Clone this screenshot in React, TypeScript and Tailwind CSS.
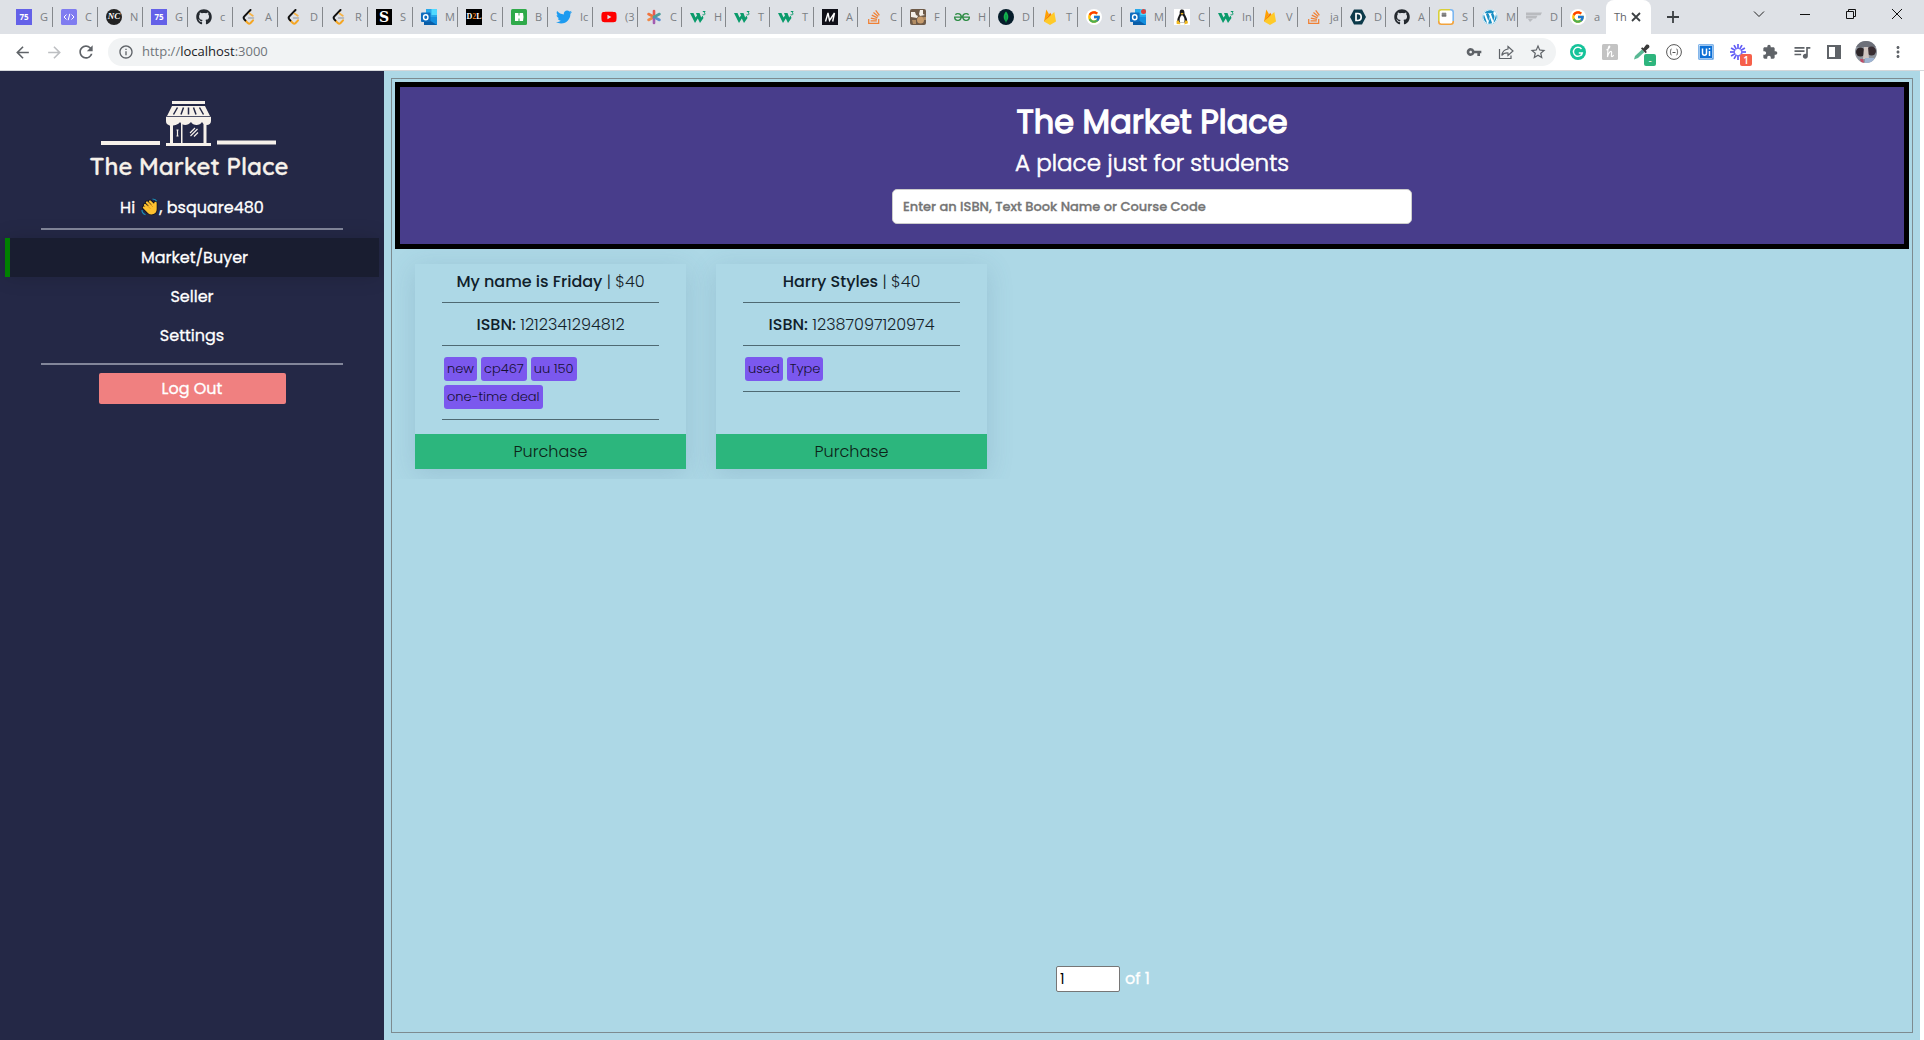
import type { ReactNode } from "react";
import {
  FaGithub,
  FaStackOverflow,
  FaTwitter,
  FaWordpress,
  FaYoutube,
} from "react-icons/fa";
import { FcGoogle } from "react-icons/fc";
import { SiGeeksforgeeks } from "react-icons/si";
import {
  MdArrowBack,
  MdArrowForward,
  MdExtension,
  MdInfoOutline,
  MdMoreVert,
  MdQueueMusic,
  MdRefresh,
  MdStarBorder,
  MdVpnKey,
} from "react-icons/md";

/* ---------- favicons ---------- */

function Badge75() {
  return (
    <span className="flex size-4 items-center justify-center bg-[#6461e8] text-[8px] font-bold text-white">
      75
    </span>
  );
}

function CodeIcon() {
  return (
    <svg viewBox="0 0 16 16" className="size-4">
      <rect width="16" height="16" rx="1.5" fill="#7f7cf0" />
      <path
        d="M5.5 5.5 3 8l2.500 2.500M10.500 5.500 13 8l-2.500 2.500M8.800 4.800 7.200 11.200"
        fill="none"
        stroke="#fff"
        strokeWidth="1"
      />
    </svg>
  );
}

function NcIcon() {
  return (
    <span className="flex size-4 items-center justify-center rounded-full bg-[#222] font-['Liberation_Serif',serif] text-[9px] font-bold text-white italic">
      NC
    </span>
  );
}

function LeetIcon() {
  return (
    <svg viewBox="0 0 16 16" className="size-4" fill="none" strokeLinecap="round">
      <path d="M12 11.300 9.600 14c-.8.800-2 .8-2.800 0L4.500 11.700" stroke="#f5a623" strokeWidth="2" />
      <path d="M7.500 9h5" stroke="#a9adb3" strokeWidth="1.500" />
      <path d="M9.500 1 3.300 7.400c-.8.900-.8 2 0 2.900l1 1.100" stroke="#111" strokeWidth="2" />
      <path d="m8.500 4.500 3.300 2.300" stroke="#f5b44a" strokeWidth="1.800" />
    </svg>
  );
}

function SIcon() {
  return (
    <span className="flex size-4 items-center justify-center bg-black font-['DejaVu_Serif',serif] text-[14px] font-bold text-white">
      S
    </span>
  );
}

function OutlookIcon({ alert = false }: { alert?: boolean }) {
  return (
    <svg viewBox="0 0 16 16" className="size-4">
      <rect x="5" y="0" width="11" height="13" fill="#28a8ea" />
      <rect x="10.500" y="0" width="5.500" height="6" fill="#50d9ff" />
      <path d="M3 8h13v8H3z" fill="#1490df" />
      <path d="m3 8 13 8H3z" fill="#0a5ea8" />
      <rect x="0" y="3.500" width="9.500" height="9.500" rx="1" fill="#0f6cbd" />
      <ellipse cx="4.750" cy="8.200" rx="2.200" ry="2.500" fill="none" stroke="#fff" strokeWidth="1.400" />
      {alert && <circle cx="13.500" cy="2.500" r="2.500" fill="#e0403a" />}
    </svg>
  );
}

function D2LIcon() {
  return (
    <span className="flex size-4 items-center justify-center bg-black font-['Liberation_Serif',serif] text-[8px] font-bold text-white">
      D<span className="text-[#e87511]">2</span>L
    </span>
  );
}

function GreenBlockIcon() {
  return (
    <svg viewBox="0 0 16 16" className="size-4">
      <rect width="16" height="16" rx="1.500" fill="#2faa4a" />
      <path d="M4 4h3.500v2.500h1V4H12l.5 4-.5 4H8.500V9.500h-1V12H4z" fill="#fff" />
    </svg>
  );
}

function SparkIcon() {
  return (
    <svg viewBox="0 0 16 16" className="size-4" strokeWidth="2.600" strokeLinecap="round">
      <path d="M8 8V2" stroke="#e8584f" />
      <path d="m8 8-5.500-3" stroke="#f0743e" />
      <path d="m8 8-5.500 3" stroke="#ee8a4a" />
      <path d="M8 8v6" stroke="#a25bb0" />
      <path d="m8 8 5.500 3" stroke="#5b8fd0" />
      <path d="m8 8 5.500-3" stroke="#4f9d9b" />
    </svg>
  );
}

function W3Icon() {
  return (
    <svg viewBox="0 0 16 16" className="size-4">
      <path d="M0 4h3.500l2 4.500L7 6.500 6 4h3.500l1.700 4.500 1.300-2 1 2.500L10 14 7.800 9.500 5 14z" fill="#0a9b6b" />
      <path
        d="M12.800 2.500h2.300l-1 1.400c1.200 0 1.300 2-.3 2-.6 0-1-.2-1.200-.6"
        fill="none"
        stroke="#0a9b6b"
      />
    </svg>
  );
}

function MIcon() {
  return (
    <svg viewBox="0 0 16 16" className="size-4">
      <rect width="16" height="16" fill="#101018" />
      <path d="M3.500 12.500 6 4l1.500 7.500L12.500 4l-1.800 8.500" fill="none" stroke="#fff" strokeWidth="1.400" />
    </svg>
  );
}

function CookieIcon() {
  return (
    <svg viewBox="0 0 16 16" className="size-4">
      <rect width="16" height="16" rx="2" fill="#6e5a48" />
      <path d="M1 3h4l1 3 2 1-1 2-6-1zM10 1h3v4l2 1-5 1-1-2z" fill="#f4efe8" />
      <circle cx="10.500" cy="11" r="3.500" fill="#c79c6d" />
      <path d="M2 11h4v4H3zM13 8h3v3h-2z" fill="#b28d64" />
    </svg>
  );
}

function MongoIcon() {
  return (
    <svg viewBox="0 0 16 16" className="size-4">
      <circle cx="8" cy="8" r="8" fill="#061d2b" />
      <path d="M8 2.500c3.200 3.600 3 7.400 0 10.500-3-3.100-3.200-6.900 0-10.500z" fill="#12b34f" />
      <path d="M8 6v8" stroke="#0a6b35" strokeWidth=".6" />
    </svg>
  );
}

function FirebaseIcon() {
  return (
    <svg viewBox="0 0 16 16" className="size-4">
      <path d="M2 12.500 4.300.500 7 5.200 2.500 12.500z" fill="#ffa000" />
      <path d="m2 12.500 6.300-8.800 1.700 3z" fill="#f57c00" />
      <path d="M2 12.500 12.300 3l1.700 9.500L8 16z" fill="#ffca28" />
    </svg>
  );
}

function GoogleIcon() {
  return (
    <span className="flex size-4 items-center justify-center rounded-full bg-white">
      <FcGoogle className="size-3.5" />
    </span>
  );
}

function PenguinIcon() {
  return (
    <svg viewBox="0 0 16 16" className="size-4">
      <rect width="16" height="16" fill="#fff" />
      <path
        d="M8 .5c2.300 0 2.500 2 2.500 4 .3 1.800 3.500 5 2.500 9H3.500C2.500 9.500 5.500 6.300 5.700 4.500c0-2 0-4 2.300-4z"
        fill="#1a1a1a"
      />
      <path d="M8 6c2.200 1.500 3 4 2.300 7.500H6C5 10 6 7.500 8 6z" fill="#fff" />
      <path
        d="m6.500 4.500 1.500-.7 1.700.7L8 5.800zM2.500 12l2-.8 2 4-3.800-.2zM13.500 12l-2.200-.8-1 4.300 3.700-1.200z"
        fill="#f2b91d"
      />
    </svg>
  );
}

function HexDIcon() {
  return (
    <svg viewBox="0 0 16 16" className="size-4">
      <path d="M4 .5h8L16 8l-4 7.500H4L0 8z" fill="#0c3a4a" />
      <path d="M6 4.500h1.800c4.500 0 4.500 7 0 7H6z" fill="none" stroke="#fff" strokeWidth="1.700" />
    </svg>
  );
}

function HashIcon() {
  return (
    <svg viewBox="0 0 16 16" className="size-4" fill="none">
      <rect x=".8" y=".8" width="14.400" height="14.400" rx="2.500" fill="#fff" />
      <path d="M.8 12V3.300A2.500 2.500 0 0 1 3.300.8H12" stroke="#d8cf3a" strokeWidth="1.600" />
      <path d="M12 .8h.7a2.500 2.500 0 0 1 2.500 2.500V12" stroke="#7cb7f0" strokeWidth="1.600" />
      <path
        d="M15.200 12v.7a2.500 2.500 0 0 1-2.500 2.500H3.300a2.500 2.500 0 0 1-2.500-2.500V12"
        stroke="#f2a33c"
        strokeWidth="1.600"
      />
      <path d="M5 3.500v4.500M7 3.500v4.500M3.500 5h5M3.500 6.800h5" stroke="#444" strokeWidth=".8" />
    </svg>
  );
}

function LinesIcon() {
  return (
    <svg viewBox="0 0 16 16" className="size-4" fill="#b9bbbf">
      <path d="M0 3.500h16l-1.500 2.800H0zM0 6.800h11.500L10 9.500H0zM2 10h5l-3 3z" />
    </svg>
  );
}

interface BrowserTab {
  label: string;
  icon: ReactNode;
}

const github = <FaGithub className="size-4 text-[#24292f]" />;
const stack = <FaStackOverflow className="size-4 text-[#f08034]" />;

const openedFirst: BrowserTab[] = [
  { label: "G", icon: <Badge75 /> },
  { label: "C", icon: <CodeIcon /> },
  { label: "N", icon: <NcIcon /> },
  { label: "G", icon: <Badge75 /> },
  { label: "c", icon: github },
  { label: "A", icon: <LeetIcon /> },
  { label: "D", icon: <LeetIcon /> },
  { label: "R", icon: <LeetIcon /> },
  { label: "S", icon: <SIcon /> },
  { label: "M", icon: <OutlookIcon /> },
  { label: "C", icon: <D2LIcon /> },
  { label: "B", icon: <GreenBlockIcon /> },
  { label: "Ic", icon: <FaTwitter className="size-4 text-[#1d9bf0]" /> },
  { label: "(3", icon: <FaYoutube className="size-4 text-[#ff0000]" /> },
];

const openedLater: BrowserTab[] = [
  { label: "C", icon: <SparkIcon /> },
  { label: "H", icon: <W3Icon /> },
  { label: "T", icon: <W3Icon /> },
  { label: "T", icon: <W3Icon /> },
  { label: "A", icon: <MIcon /> },
  { label: "C", icon: stack },
  { label: "F", icon: <CookieIcon /> },
  { label: "H", icon: <SiGeeksforgeeks className="size-4 text-[#2f8d46]" /> },
  { label: "D", icon: <MongoIcon /> },
  { label: "T", icon: <FirebaseIcon /> },
  { label: "c", icon: <GoogleIcon /> },
  { label: "M", icon: <OutlookIcon alert /> },
  { label: "C", icon: <PenguinIcon /> },
  { label: "In", icon: <W3Icon /> },
  { label: "V", icon: <FirebaseIcon /> },
  { label: "ja", icon: stack },
  { label: "D", icon: <HexDIcon /> },
  { label: "A", icon: github },
  { label: "S", icon: <HashIcon /> },
  { label: "M", icon: <FaWordpress className="size-4 rounded-full bg-white text-[#1a8fc4]" /> },
  { label: "D", icon: <LinesIcon /> },
  { label: "a", icon: <GoogleIcon /> },
];

function Tab({ tab, width, last }: { tab: BrowserTab; width: string; last?: boolean }) {
  return (
    <button
      className={`flex h-5 shrink-0 items-center gap-2 border-r pl-2 ${width} ${
        last ? "border-transparent" : "border-[#85888c]"
      }`}
    >
      <span className="shrink-0">{tab.icon}</span>
      <span className="text-[11px] whitespace-nowrap text-[#7b7f84]">{tab.label}</span>
    </button>
  );
}

function TabStrip() {
  return (
    <div className="flex h-[34px] items-center bg-[#dee1e6] pl-2">
      {openedFirst.map((tab, i) => (
        <Tab key={i} tab={tab} width="w-[45px]" />
      ))}
      {openedLater.map((tab, i) => (
        <Tab key={i} tab={tab} width="w-11" last={i === openedLater.length - 1} />
      ))}
      <div className="flex h-full w-[45px] shrink-0 items-center gap-1 rounded-t-lg bg-white pl-2">
        <span className="text-[11px] whitespace-nowrap text-[#5f6368]">Th</span>
        <button aria-label="Close tab">
          <svg viewBox="0 0 10 10" className="size-2.5" stroke="#3c4043" strokeWidth="1.800">
            <path d="m1 1 8 8M9 1 1 9" />
          </svg>
        </button>
      </div>
      <button aria-label="New tab" className="ml-4 shrink-0">
        <svg viewBox="0 0 12 12" className="size-3" stroke="#3c4043" strokeWidth="1.800">
          <path d="M6 0v12M0 6h12" />
        </svg>
      </button>
      <div className="mr-1 mb-1.5 ml-auto flex">
        <button aria-label="Search tabs" className="flex w-[46px] justify-center">
          <svg viewBox="0 0 12 12" className="size-3" fill="none" stroke="#222">
            <path d="m1 3.500 5 5 5-5" />
          </svg>
        </button>
        <button aria-label="Minimize" className="flex w-[46px] justify-center">
          <svg viewBox="0 0 12 12" className="size-3" stroke="#111">
            <path d="M1 6.500h10" />
          </svg>
        </button>
        <button aria-label="Restore" className="flex w-[46px] justify-center">
          <svg viewBox="0 0 12 12" className="size-3" fill="none" stroke="#111">
            <path d="M1.500 3.500h7v7h-7zM3.500 3.500v-2h7v7h-2" />
          </svg>
        </button>
        <button aria-label="Close" className="flex w-[46px] justify-center">
          <svg viewBox="0 0 12 12" className="size-3" stroke="#111">
            <path d="m1 1 10 10M11 1 1 11" />
          </svg>
        </button>
      </div>
    </div>
  );
}

function ToolButton({ label, children }: { label: string; children: ReactNode }) {
  return (
    <button
      aria-label={label}
      className="relative flex h-7 w-8 shrink-0 items-center justify-center text-[#5f6368]"
    >
      {children}
    </button>
  );
}

const loomRays = [0, 30, 60, 90, 120, 150, 180, 210, 240, 270, 300, 330];

function Toolbar() {
  return (
    <div className="flex h-[37px] items-center border-b border-[#d5d8db] bg-white pr-2.5 pl-1.5">
      <ToolButton label="Back">
        <MdArrowBack className="size-[19px]" />
      </ToolButton>
      <ToolButton label="Forward">
        <MdArrowForward className="size-[19px] text-[#bdbfc2]" />
      </ToolButton>
      <ToolButton label="Reload">
        <MdRefresh className="size-5" />
      </ToolButton>

      <div className="mx-1.5 flex h-7 flex-1 items-center rounded-full bg-[#f1f3f4] pr-0.5 pl-2.5">
        <MdInfoOutline className="size-4 text-[#5f6368]" />
        <p className="ml-2 flex-1 text-[13px] text-[#70757a]">
          http://<span className="text-[#202124]">localhost</span>:3000
        </p>
        <ToolButton label="Saved passwords">
          <MdVpnKey className="size-4" />
        </ToolButton>
        <ToolButton label="Share">
          <svg viewBox="0 0 16 16" className="size-4" fill="none" stroke="currentColor" strokeWidth="1.200">
            <path d="M1.500 5v9.500h11.500v-3" />
            <path d="M10 2.500 15 7l-5 4.500V9C7 8.800 5 9.800 3.800 11.500 4.200 8 6.500 5.500 10 5z" />
          </svg>
        </ToolButton>
        <ToolButton label="Bookmark">
          <MdStarBorder className="size-[18px]" />
        </ToolButton>
      </div>

      <ToolButton label="Grammarly">
        <svg viewBox="0 0 16 16" className="size-4" fill="none">
          <circle cx="8" cy="8" r="8" fill="#15c39a" />
          <path d="M11.500 5A4.500 4.500 0 1 0 12.300 9H8.800M12.300 9l-1 2.500" stroke="#fff" strokeWidth="1.400" />
        </svg>
      </ToolButton>
      <ToolButton label="Honey">
        <svg viewBox="0 0 16 16" className="size-4" fill="none">
          <rect width="16" height="16" rx="1.500" fill="#c3c3c3" />
          <path
            d="M4.500 6C7 5 8.700 2 7.200 2S5.800 8 5.500 13C6.300 9.500 8 7 9.300 7.500c1.300.8-.8 4.500.3 5 .8.200 1.500-.5 2-1.500"
            stroke="#fff"
            strokeWidth="1.200"
          />
        </svg>
      </ToolButton>
      <ToolButton label="Color picker">
        <svg viewBox="0 0 16 16" className="size-4">
          <path d="m0 15.500 1-3.500L8 5.500 10.500 8 4 14z" fill="#59b894" />
          <path
            d="m7 4.500 1.200-1.200 1.300 1L12 1c1.800-1.500 4.500.5 3 2.800l-3.300 3 1.200 1.200-1.200 1.200z"
            fill="#3a3a3a"
          />
        </svg>
        <span className="absolute right-0.5 bottom-0 flex size-3 items-center justify-center rounded-xs bg-[#2db57d] text-[10px] text-white">
          -
        </span>
      </ToolButton>
      <ToolButton label="JSON viewer">
        <svg viewBox="0 0 16 16" className="size-4" fill="none" stroke="#555">
          <circle cx="8" cy="8" r="7.400" />
          <path d="M5.500 5C4 5 5.300 7.500 4 8c1.300.5 0 3 1.500 3M10.500 5c1.500 0 .2 2.500 1.500 3-1.300.5 0 3-1.500 3M6.500 8.500h3" />
        </svg>
      </ToolButton>
      <ToolButton label="UiPath">
        <svg viewBox="0 0 16 16" className="size-4" fill="none" stroke="#fff">
          <rect width="16" height="16" fill="#0b6fd6" />
          <rect x="1.500" y="1.500" width="13" height="13" strokeWidth=".6" />
          <path d="M4.500 4.500v4.800c0 2.500 4 2.500 4 0V4.500M11.500 7v5M11.500 4v1.500" strokeWidth="1.500" />
        </svg>
      </ToolButton>
      <ToolButton label="Loom">
        <svg viewBox="0 0 16 16" className="size-4" stroke="#625df5" strokeWidth="1.700">
          {loomRays.map((angle) => (
            <path key={angle} d="M8 0v5" transform={`rotate(${angle} 8 8)`} />
          ))}
        </svg>
        <span className="absolute right-0.5 bottom-0 flex size-3 items-center justify-center rounded-xs bg-[#f6604a] text-[10px] font-semibold text-white">
          1
        </span>
      </ToolButton>
      <ToolButton label="Extensions">
        <MdExtension className="size-4" />
      </ToolButton>
      <ToolButton label="Media controls">
        <MdQueueMusic className="size-5" />
      </ToolButton>
      <ToolButton label="Side panel">
        <svg viewBox="0 0 14 14" className="size-3.5">
          <path d="M1 1h12v12H1z" fill="none" stroke="currentColor" strokeWidth="2" />
          <path d="M8 1h5v12H8z" fill="currentColor" />
        </svg>
      </ToolButton>
      <ToolButton label="Profile">
        <svg viewBox="0 0 22 22" className="size-[22px] rounded-full">
          <rect width="22" height="22" fill="#8d939c" />
          <path d="M0 0h22v6H0z" fill="#6d7079" />
          <circle cx="5.500" cy="11" r="4.500" fill="#2c2529" />
          <circle cx="16.500" cy="10" r="4.500" fill="#3a2e33" />
          <path d="M9 6h4l1 12H8z" fill="#cfc4c0" />
          <path d="M5 18h3l1 4H6z" fill="#c04a68" />
          <path d="M10 17h9v5h-9z" fill="#9db3d2" />
        </svg>
      </ToolButton>
      <ToolButton label="Menu">
        <MdMoreVert className="size-[18px]" />
      </ToolButton>
    </div>
  );
}

/* ---------- page ---------- */

function Logo() {
  return (
    <div className="flex flex-col items-center text-[#f6f1ea]">
      <svg viewBox="0 0 176 46" className="h-[46px] w-44" fill="currentColor">
        <path d="M0 40h59v4H0zM116 39.500h59v4h-59z" />
        <path d="M71 0h33v3H71zM71 5h33l6 12H65z" />
        <path d="M65 16h45v4c0 5-7 5-9 1-2 4-9 4-11 0-3 4-9 4-11 0-2 4-14 6-14-1z" />
        <path d="M69 22h3v20h-3zM80 22h1.500v20H80zM102.500 22h3v20h-3zM65 42h45v3H65z" />
        <path
          d="m76.500 6.500-4 7M82.500 6.500l-2.500 7M87.500 6.500v7M92.500 6.500l2.500 7M98.500 6.500l4 7"
          stroke="#242846"
          strokeWidth="1.500"
        />
        <path d="M66 15.500h43" stroke="#242846" strokeWidth=".8" />
        <path
          d="M76.500 29v6M75.500 29h2M75.500 35h2M89 32l5-5M89.500 35l7-7M93 35.500l4-4"
          fill="none"
          stroke="currentColor"
          strokeWidth="1.200"
        />
      </svg>
      <p className="mt-1 font-['Quicksand','Nunito','Lato',sans-serif] text-2xl leading-[30px] font-semibold whitespace-nowrap">
        The Market Place
      </p>
    </div>
  );
}

function WavingHand() {
  return (
    <svg viewBox="0 0 18 18" className="ml-0.5 inline size-[18px] align-[-3px]" role="img" aria-label="waving hand">
      <g stroke="#10131f" strokeWidth="4" strokeLinecap="round" strokeLinejoin="round" fill="#10131f">
        <path d="m4 7 6 6M6 4.500l6 6M9 3.500l5 5M14.500 5v6c0 4-4 5.500-7 3L3 9.500" />
      </g>
      <g stroke="#fdc130" strokeWidth="2.400" strokeLinecap="round" strokeLinejoin="round" fill="#fdc130">
        <path d="m4 7 6 6M6 4.500l6 6M9 3.500l5 5M14.500 5v6c0 4-4 5.500-7 3L3 9.500" />
      </g>
      <path d="m5.500 6.800 4 4M8 5l4 4" stroke="#d98a12" strokeWidth=".7" />
      <path
        d="M11.500 1c2 0 3.500.8 4.300 2.300M1 12c0 2.200 1.200 4 3.500 4.600"
        fill="none"
        stroke="#1a8fb8"
        strokeWidth="1.200"
      />
    </svg>
  );
}

const navLinks = [
  { label: "Market/Buyer", href: "#market", active: true },
  { label: "Seller", href: "#seller", active: false },
  { label: "Settings", href: "#settings", active: false },
];

function Sidebar() {
  return (
    <aside className="flex w-1/5 flex-col bg-[#242846] px-[5px] pt-[30px] text-center text-base text-white [-webkit-text-stroke:0.3px]">
      <div className="pr-1.5">
        <Logo />
      </div>
      <p className="mt-[15px] leading-6">
        Hi <WavingHand />, bsquare480
      </p>
      <hr className="mx-9 mt-2 border-t-2 border-[#82869a]" />
      <nav className="mt-2 flex flex-col">
        {navLinks.map((link) => (
          <a
            key={link.label}
            href={link.href}
            className={
              link.active
                ? "border-l-[5px] border-[#008000] bg-[#191d30] py-[7px] leading-[25px] shadow-[0_0_20px_rgba(0,0,0,0.15)]"
                : "py-[7px] leading-[25px]"
            }
          >
            {link.label}
          </a>
        ))}
      </nav>
      <hr className="mx-9 mt-2 border-t-2 border-[#82869a]" />
      <button className="mx-auto mt-2 h-[31px] w-1/2 rounded-xs bg-[#f08080]">Log Out</button>
    </aside>
  );
}

function Hero() {
  return (
    <header className="flex flex-col items-center border-[5px] border-black bg-[#483d8b] pt-3 pb-5 text-white">
      <h1 className="text-[32px] leading-[46px] [-webkit-text-stroke:1.3px]">The Market Place</h1>
      <h2 className="text-[23px] leading-9 font-light [-webkit-text-stroke:0.6px]">
        A place just for students
      </h2>
      <input
        type="text"
        aria-label="Search listings"
        placeholder="Enter an ISBN, Text Book Name or Course Code"
        className="mt-2 h-[35px] w-[520px] rounded-[5px] border border-[#ccc] bg-white px-2.5 text-[13px] font-medium text-black [-webkit-text-stroke:0.3px] placeholder:text-[#757575]"
      />
    </header>
  );
}

interface Listing {
  title: string;
  price: number;
  isbn: string;
  tags: string[];
}

const listings: Listing[] = [
  {
    title: "My name is Friday",
    price: 40,
    isbn: "1212341294812",
    tags: ["new", "cp467", "uu 150", "one-time deal"],
  },
  {
    title: "Harry Styles",
    price: 40,
    isbn: "12387097120974",
    tags: ["used", "Type"],
  },
];

function ListingCard({ listing }: { listing: Listing }) {
  return (
    <article className="flex w-[271px] flex-col text-center text-base font-light text-[#14222a] shadow-[0_5px_25px_rgba(70,110,140,0.2)]">
      <div className="flex-1 px-[27px] pt-1.5 pb-[14px]">
        <h3 className="leading-6">
          <strong className="font-medium text-[#10202a]">{listing.title}</strong> | ${listing.price}
        </h3>
        <hr className="mt-2 border-[#4f6a73]" />
        <p className="mt-2.5 leading-6">
          <strong className="font-medium text-[#10202a]">ISBN:</strong> {listing.isbn}
        </p>
        <hr className="mt-2 border-[#4f6a73]" />
        <ul className="mt-[11px] flex flex-wrap gap-1 px-0.5">
          {listing.tags.map((tag) => (
            <li key={tag} className="rounded-[3px] bg-[#7b58ee] px-[3px] text-[13px] leading-6 text-[#150f33]">
              {tag}
            </li>
          ))}
        </ul>
        <hr className="mt-2.5 border-[#4f6a73]" />
      </div>
      <button className="h-[35px] bg-[#2cb67d] text-[#0c2418]">Purchase</button>
    </article>
  );
}

function Pagination() {
  return (
    <div className="mt-auto mb-[37px] flex items-center justify-center gap-[5px] pr-[98px] text-white">
      <input
        type="number"
        aria-label="Page"
        defaultValue={1}
        className="h-[26px] w-16 rounded-xs border border-[#767676] bg-white px-[3px] text-sm text-black"
      />
      <span className="text-base [-webkit-text-stroke:0.3px]">of 1</span>
    </div>
  );
}

export default function App() {
  return (
    <div className="flex min-h-screen flex-col bg-white font-['Open_Sans','Noto_Sans',sans-serif]">
      <TabStrip />
      <Toolbar />
      <div className="mr-1 flex flex-1 font-['Poppins','Inter',sans-serif]">
        <Sidebar />
        <main className="flex flex-1 bg-[#add8e6] p-[7px]">
          <div className="flex flex-1 flex-col border border-[#7d8b90] p-[3px]">
            <Hero />
            <section className="flex flex-wrap gap-[30px] overflow-hidden px-5 pt-[15px] pb-2.5">
              {listings.map((listing) => (
                <ListingCard key={listing.isbn} listing={listing} />
              ))}
            </section>
            <Pagination />
          </div>
        </main>
      </div>
    </div>
  );
}
